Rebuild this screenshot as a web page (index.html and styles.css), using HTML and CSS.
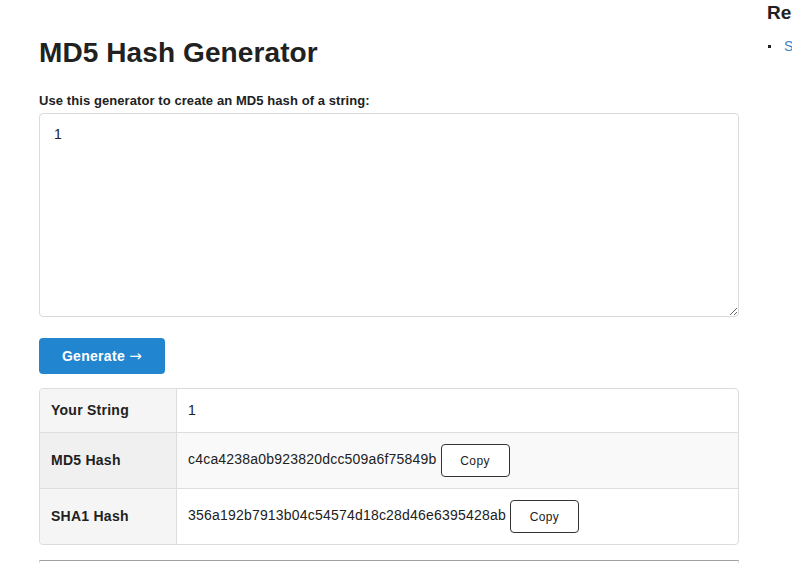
FILE: index.html
```html
<!DOCTYPE html>
<html lang="en">
<head>
<meta charset="utf-8">
<title>MD5 Hash Generator</title>
<link rel="stylesheet" href="styles.css">
</head>
<body>
<div class="page">
  <main class="main">
    <h1 class="title">MD5 Hash Generator</h1>
    <form class="form">
      <label class="field-label" for="input">Use this generator to create an MD5 hash of a string:</label>
      <textarea id="input" class="input">1</textarea>
      <button type="button" class="generate">Generate <span class="arrow">→</span></button>
    </form>
    <table class="results">
      <tbody>
        <tr>
          <td class="key">Your String</td>
          <td class="val">1</td>
        </tr>
        <tr class="striped">
          <td class="key">MD5 Hash</td>
          <td class="val">c4ca4238a0b923820dcc509a6f75849b <button type="button" class="copy">Copy</button></td>
        </tr>
        <tr>
          <td class="key">SHA1 Hash</td>
          <td class="val">356a192b7913b04c54574d18c28d46e6395428ab <button type="button" class="copy">Copy</button></td>
        </tr>
      </tbody>
    </table>
    <div class="next-box"></div>
  </main>
  <aside class="sidebar">
    <h3 class="side-title">Resources</h3>
    <ul class="side-list">
      <li><a href="#">SHA1 Hash Generator</a></li>
    </ul>
  </aside>
</div>
</body>
</html>
```
FILE: styles.css
```css
html {
  overflow: hidden;
}
body {
  margin: 0;
  background: #ffffff;
  font-family: "Liberation Sans", Arial, sans-serif;
  color: #212121;
  font-size: 14px;
}
.page {
  display: flex;
  gap: 28px;
  padding-left: 39px;
  width: 1200px;
}
.main {
  width: 700px;
  flex: none;
}
.title {
  margin: 35px 0 22px;
  font-size: 28px;
  line-height: 36px;
  font-weight: 700;
  letter-spacing: 0.1px;
  color: #212121;
}
.form {
  display: flex;
  flex-direction: column;
  align-items: flex-start;
}
.field-label {
  font-size: 13px;
  line-height: 16px;
  font-weight: 700;
  letter-spacing: 0.08px;
  margin-bottom: 4px;
}
.input {
  box-sizing: border-box;
  width: 700px;
  height: 204px;
  margin: 0;
  padding: 11px 14px;
  border: 1px solid #dadada;
  border-radius: 4px;
  font-family: "Liberation Sans", Arial, sans-serif;
  font-size: 14px;
  line-height: 18px;
  color: #212121;
  resize: vertical;
  outline: none;
}
.generate {
  box-sizing: border-box;
  margin-top: 21px;
  min-width: 126px;
  height: 36px;
  padding: 0 20px;
  border: none;
  border-radius: 4px;
  background: #2185d0;
  color: #ffffff;
  font-family: "Liberation Sans", Arial, sans-serif;
  font-size: 14px;
  font-weight: 700;
  letter-spacing: 0.3px;
}
.arrow {
  font-family: "DejaVu Sans", sans-serif;
  font-weight: 400;
  font-size: 15px;
}
.results {
  margin-top: 14px;
  width: 700px;
  border: 1px solid #dcdcdc;
  border-radius: 4px;
  border-collapse: separate;
  border-spacing: 0;
  font-size: 14px;
  line-height: 21px;
  color: #212121;
}
.results td {
  padding: 11px;
  vertical-align: middle;
  white-space: nowrap;
}
.results tr + tr td {
  border-top: 1px solid #dedede;
}
.key {
  width: 114px;
  font-weight: 700;
  letter-spacing: 0.25px;
  background: #f5f5f5;
  border-right: 1px solid #dedede;
}
.val {
  letter-spacing: 0.2px;
}
.results tr:first-child .key {
  border-top-left-radius: 4px;
}
.results tr:last-child .key {
  border-bottom-left-radius: 4px;
}
.striped .key {
  background: #f0f0f0;
}
.striped .val {
  background: #f9f9f9;
}
.copy {
  box-sizing: border-box;
  width: 69px;
  height: 33px;
  margin: 0;
  padding: 0;
  border: 1px solid #333333;
  border-radius: 4px;
  background: #ffffff;
  color: #222222;
  font-family: "Liberation Sans", Arial, sans-serif;
  font-size: 12px;
  letter-spacing: 0.4px;
  vertical-align: middle;
}
.next-box {
  margin-top: 15px;
  height: 40px;
  border-top: 1px solid #a0a0a0;
  border-left: 1px solid #dddddd;
  border-right: 1px solid #dddddd;
}
.sidebar {
  width: 250px;
  flex: none;
}
.side-title {
  margin: 1px 0 11px;
  font-size: 19px;
  line-height: 24px;
  font-weight: 700;
  color: #212121;
  white-space: nowrap;
}
.side-list {
  list-style: none;
  margin: 0;
  padding: 0;
}
.side-list li {
  display: flex;
  align-items: center;
  font-size: 14px;
  line-height: 20px;
  white-space: nowrap;
}
.side-list li::before {
  content: "";
  width: 3px;
  height: 3px;
  background: #222222;
  margin: 0 13px 0 1px;
  flex: none;
}
.side-list a {
  color: #4183c4;
  text-decoration: none;
}
```
